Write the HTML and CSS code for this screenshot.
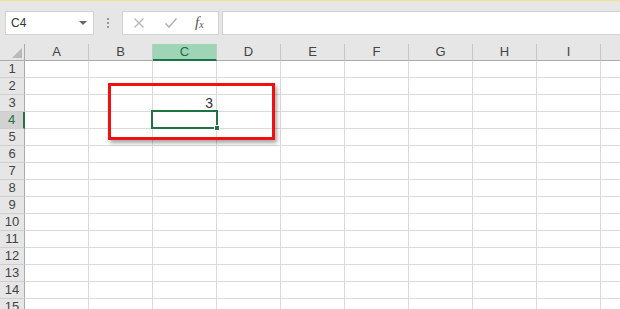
FILE: index.html
```html
<!DOCTYPE html>
<html>
<head>
<meta charset="utf-8">
<link rel="stylesheet" href="styles.css">
</head>
<body>
<div class="topline"></div>
<div class="toolbar">
  <div class="namebox"><span class="ref">C4</span><span class="caret"></span></div>
  <div class="sep"><span></span><span></span><span></span></div>
  <div class="fbtns">
    <svg class="ic" width="12" height="12" viewBox="0 0 12 12"><path d="M1.5 1.5L10.5 10.5M10.5 1.5L1.5 10.5" stroke="#b5b5b5" stroke-width="1.3" fill="none"/></svg>
    <svg class="ic" width="14" height="12" viewBox="0 0 14 12"><path d="M1.5 6.5L5 10L12.5 1.5" stroke="#b5b5b5" stroke-width="1.6" fill="none"/></svg>
    <span class="fx">f<sub>x</sub></span>
  </div>
  <div class="finput"></div>
</div>
<div class="sheet">
  <div class="grid" id="grid"></div>
  <div class="selection"><span class="handle"></span></div>
  <div class="callout"></div>
</div>
<script src="app.js"></script>
</body>
</html>
```
FILE: app.js
```js
(function(){
  var g = document.getElementById('grid');
  var cols = ['A','B','C','D','E','F','G','H','I','J'];
  var html = '<div class="corner"><svg width="10" height="10" viewBox="0 0 10 10"><path d="M10 0L10 10L0 10Z" fill="#b9b9b9"/></svg></div>';
  cols.forEach(function(c){
    html += '<div class="ch' + (c==='C' ? ' ch-sel' : '') + '">' + (c==='J' ? '' : c) + '</div>';
  });
  for (var r = 1; r <= 15; r++) {
    html += '<div class="rh' + (r===4 ? ' rh-sel' : '') + '">' + r + '</div>';
    cols.forEach(function(c){
      var v = (r===3 && c==='C') ? '3' : '';
      html += '<div class="cell">' + v + '</div>';
    });
  }
  g.innerHTML = html;
})();
```
FILE: styles.css
```css
* { box-sizing: border-box; }
html, body { margin: 0; padding: 0; }
body {
  width: 620px;
  height: 309px;
  overflow: hidden;
  background: #e6e6e6;
  font-family: "Liberation Sans", Arial, sans-serif;
  color: #444;
}
.topline { height: 1px; background: #f1e38f; }
.toolbar {
  display: flex;
  height: 43px;
  padding: 10px 0 9px 5px;
  background: #e6e6e6;
}
.namebox {
  width: 89px;
  height: 24px;
  background: #fff;
  border: 1px solid #d2d2d2;
  display: flex;
  align-items: center;
  padding-left: 5px;
  font-size: 12px;
  color: #333;
}
.namebox .ref { flex: 1; }
.caret {
  width: 0; height: 0;
  border-left: 4px solid transparent;
  border-right: 4px solid transparent;
  border-top: 4px solid #666;
  margin-right: 6px;
}
.sep {
  width: 28px;
  display: flex;
  flex-direction: column;
  align-items: center;
  justify-content: center;
  gap: 2px;
}
.sep span { width: 2px; height: 2px; background: #9a9a9a; }
.fbtns {
  width: 97px;
  height: 24px;
  background: #fff;
  border: 1px solid #d2d2d2;
  display: flex;
  align-items: center;
  padding-left: 10px;
}
.fbtns .ic:first-child { margin-right: 19px; }
.fbtns .ic:nth-child(2) { margin-right: 17px; }
.fx {
  font-family: "Liberation Serif", "Times New Roman", serif;
  font-style: italic;
  font-size: 15px;
  line-height: 15px;
  color: #555;
}
.fx sub { font-size: 10px; vertical-align: -1px; }
.finput {
  flex: 1;
  height: 24px;
  margin-left: 3px;
  background: #fff;
  border: 1px solid #d2d2d2;
  border-right: none;
}
.sheet { position: relative; background: #fff; }
.grid {
  display: grid;
  grid-template-columns: 25px repeat(9, 64px) 30px;
  grid-template-rows: 17px repeat(15, 17px);
}
.corner {
  background: #e6e6e6;
  border-right: 1px solid #ababab;
  border-bottom: 1px solid #ababab;
  display: flex;
  align-items: flex-end;
  justify-content: flex-end;
  padding: 0 2px 2px 0;
}
.ch {
  background: #e6e6e6;
  border-right: 1px solid #c6c6c6;
  border-bottom: 1px solid #ababab;
  font-size: 13px;
  line-height: 16px;
  text-align: center;
  color: #444;
}
.ch-sel {
  background: #9fd5b7;
  color: #1e6b40;
  border-bottom: 2px solid #217346;
  line-height: 15px;
}
.rh {
  background: #e6e6e6;
  border-right: 1px solid #ababab;
  border-bottom: 1px solid #cfcfcf;
  font-size: 13px;
  line-height: 16px;
  text-align: center;
  color: #444;
}
.rh-sel {
  background: #d2d2d2;
  color: #217346;
  border-right: 2px solid #217346;
}
.cell {
  border-right: 1px solid #dadada;
  border-bottom: 1px solid #dadada;
  font-size: 14px;
  line-height: 17px;
  text-align: right;
  padding-right: 3px;
  color: #333;
}
.selection {
  position: absolute;
  left: 151px;
  top: 66px;
  width: 67px;
  height: 19px;
  border: 2px solid #217346;
}
.handle {
  position: absolute;
  right: -4px;
  bottom: -4px;
  width: 6px;
  height: 6px;
  background: #217346;
  border: 1px solid #fff;
}
.callout {
  position: absolute;
  left: 108px;
  top: 39px;
  width: 167px;
  height: 57px;
  border: 3px solid #f01010;
  box-shadow: 2px 3px 4px rgba(0,0,0,0.35);
}
```
